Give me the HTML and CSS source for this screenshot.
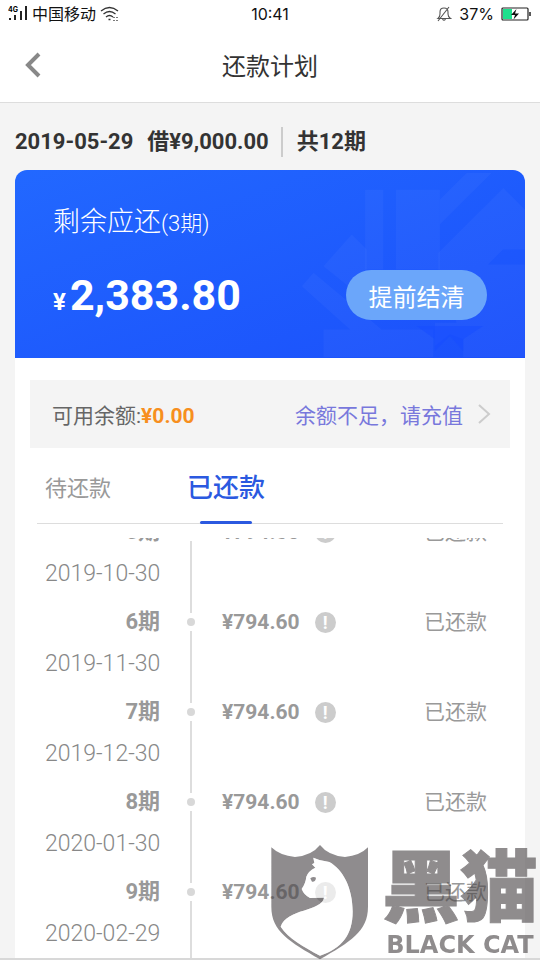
FILE: index.html
```html
<!DOCTYPE html>
<html lang="zh-CN">
<head>
    <meta charset="UTF-8">
    <meta name="viewport" content="width=device-width, initial-scale=1.0">
    <title>还款计划</title>
    <link rel="stylesheet" href="styles.css">
</head>
<body>

<div class="status-bar">
    <div class="status-left">
        <svg width="20" height="16" viewBox="0 0 20 16">
            <text x="0" y="6" class="net">4G</text>
            <path d="M1 12h2v2H1zM6 9h2v5H6zM12 5h2v9h-2zM17 0h2v14h-2z" fill="#222"/>
        </svg>
        <span>中国移动</span>
        <svg width="19" height="16" viewBox="0 0 19 16" fill="none" stroke="#333" stroke-width="1.3">
            <path d="M1 5Q9.500 -2 18 5M3.500 8Q9.500 3 15.500 8M6 11Q9.500 8 13 11"/>
            <path d="M8.500 13.500h2M14 11v1M17 11v1M14 14v1M17 14v1"/>
        </svg>
    </div>
    <div class="status-time">10:41</div>
    <div class="status-right">
        <svg width="16" height="16" viewBox="0 0 16 16" fill="none" stroke="#555" stroke-width="1.1">
            <path d="M2 12.500Q4 11 4 8V6Q4 2 8 2T12 6V8Q12 11 14.500 12.500ZM6.500 13Q8 15.500 9.500 13M13 1L2 15"/>
        </svg>
        <span>37%</span>
        <svg width="31" height="14" viewBox="0 0 31 14">
            <rect x="1" y="1" width="26" height="12" rx="1" fill="#fff" stroke="#222" stroke-width="1.2"/>
            <path d="M2 2h9v10H2z" fill="#1ee08d"/>
            <path d="M29 5v4" stroke="#222" stroke-width="1.500"/>
            <path d="M15.500 2L10 8h4l-1.500 4.500L18 6.500h-4z" fill="#111"/>
        </svg>
    </div>
</div>

<header class="nav">
    <button class="back" aria-label="返回">
        <svg width="18" height="26" viewBox="0 0 18 26" fill="none" stroke="#888" stroke-width="4">
            <path d="M15 2L4 13L15 24"/>
        </svg>
    </button>
    <h1>还款计划</h1>
</header>

<main class="container">
    <div class="loan">
        <span>2019-05-29</span>
        <span class="loan-amount">借¥9,000.00</span>
        <span class="loan-terms">共12期</span>
    </div>

    <section class="summary">
        <svg class="summary-bg" viewBox="0 181 765 562" width="255" height="187">
            <g fill="#fff" fill-opacity=".03">
                <path d="M285 240H340V480H285zM378 240H510V480H378z"/>
                <path d="M510 345L665 190H590L510 270zM505 430L700 235L765 300V420H700L655 465H765V743H580V690L540 675L495 710V640H560L505 480z"/>
                <path d="M160 470L245 375L290 420V480L235 530zM95 530L130 490L340 665H245zM160 660H490V743H160z"/>
            </g>
            <path d="M440 650H640L580 690V725L540 680L495 725V690z" fill="#164bff" fill-opacity=".5"/>
        </svg>
        <div class="summary-title">剩余应还<small>(3期)</small></div>
        <div class="summary-row">
            <div class="total"><small>¥</small>2,383.80</div>
            <button class="settle">提前结清</button>
        </div>
    </section>

    <section class="panel">
        <div class="available">
            <div>可用余额:<b>¥0.00</b></div>
            <a href="#">余额不足，请充值
                <svg width="14" height="22" viewBox="0 0 14 22" fill="none" stroke="#ccc" stroke-width="2">
                    <path d="M2 2L12 11L2 20"/>
                </svg>
            </a>
        </div>

        <div class="tabs">
            <button class="tab">待还款</button>
            <button class="tab active">已还款</button>
        </div>

        <div class="list">
            <div class="row">
                <div class="term"><b>5期</b><span>2019-10-30</span></div>
                <div class="line"></div>
                <div class="amount">¥794.60 <i class="info">!</i></div>
                <div class="state">已还款</div>
            </div>
            <div class="row">
                <div class="term"><b>6期</b><span>2019-11-30</span></div>
                <div class="line"></div>
                <div class="amount">¥794.60 <i class="info">!</i></div>
                <div class="state">已还款</div>
            </div>
            <div class="row">
                <div class="term"><b>7期</b><span>2019-12-30</span></div>
                <div class="line"></div>
                <div class="amount">¥794.60 <i class="info">!</i></div>
                <div class="state">已还款</div>
            </div>
            <div class="row">
                <div class="term"><b>8期</b><span>2020-01-30</span></div>
                <div class="line"></div>
                <div class="amount">¥794.60 <i class="info">!</i></div>
                <div class="state">已还款</div>
            </div>
            <div class="row">
                <div class="term"><b>9期</b><span>2020-02-29</span></div>
                <div class="line"></div>
                <div class="amount">¥794.60 <i class="info">!</i></div>
                <div class="state">已还款</div>
            </div>
        </div>
    </section>
</main>

<div class="watermark">
    <svg width="100" height="116" viewBox="30 27 300 348">
        <path class="shield" fill-rule="evenodd" d="M34 37Q60 62 105 66Q155 62 180 30Q205 62 255 66Q300 62 324 37V215C324 290 270 320 180 373C90 320 34 290 34 215ZM160 68L178 75L208 81C250 105 278 160 278 230C278 300 245 340 180 362C130 335 85 310 62 275C80 220 185 230 192 188L150 189Q132 180 125 162Q137 145 139 125Q145 108 166 98L156 88L163 84Z"/>
        <path class="cat" d="M160 68L178 75L208 81C250 105 278 160 278 230C278 300 245 340 180 362C130 335 85 310 62 275C80 220 185 230 192 188L150 189Q132 180 125 162Q137 145 139 125Q145 108 166 98L156 88L163 84Z"/>
        <path class="shield" d="M151 130Q160 123 168 128Q167 141 156 140Q153 136 151 130Z"/>
    </svg>
    <div class="brand">
        <div class="brand-cn">黑猫</div>
        <div class="brand-en">BLACK CAT</div>
    </div>
</div>

</body>
</html>
```

FILE: styles.css
```css
* {
    box-sizing: border-box;
}
body {
    margin: 0;
    height: 100vh;
    display: flex;
    flex-direction: column;
    overflow: hidden;
    background: #f4f4f4;
    border-bottom: 2px solid #d8d8d8;
    color: #333;
    font-family: Roboto, "Noto Sans CJK SC", sans-serif;
}
button {
    padding: 0;
    border: none;
    background: none;
    font-family: inherit;
    cursor: pointer;
}
a {
    text-decoration: none;
}
svg {
    display: block;
}

/* status bar */
.status-bar {
    display: grid;
    grid-template-columns: 1fr auto 1fr;
    align-items: center;
    height: 28px;
    padding: 0 8px;
    background: #fff;
    color: #111;
    font-size: 16px;
    line-height: 20px;
    font-family: Inter, "Noto Sans CJK SC", sans-serif;
}
.status-left, .status-right {
    display: flex;
    align-items: center;
    gap: 4px;
}
.status-right {
    justify-content: flex-end;
    gap: 7px;
}
.net {
    font-size: 7px;
    font-weight: bold;
}

/* nav */
.nav {
    display: grid;
    grid-template-columns: 60px 1fr 60px;
    align-items: center;
    height: 75px;
    background: #fff;
    border-bottom: 1px solid #ddd;
}
.back {
    justify-self: center;
    margin-left: 6px;
}
.nav h1 {
    margin: 0;
    padding-top: 4px;
    text-align: center;
    font-size: 24px;
    line-height: 32px;
    font-weight: normal;
}

.container {
    flex: 1;
    min-height: 0;
    display: flex;
    flex-direction: column;
    padding: 0 15px;
}
.loan {
    display: flex;
    align-items: baseline;
    height: 67px;
    padding-top: 24px;
    font-size: 22px;
    line-height: 30px;
    font-weight: bold;
}
.loan-amount {
    margin-left: 14px;
}
.loan-terms {
    margin-left: 12px;
    padding-left: 14px;
    border-left: 2px solid #ccc;
}

/* blue card */
.summary {
    position: relative;
    padding: 30px 38px 38px;
    border-radius: 12px 12px 0 0;
    background: linear-gradient(160deg, #2268ff, #1b50fb);
    color: #fff;
}
.summary-bg {
    position: absolute;
    top: 0;
    right: 0;
}
.summary-title {
    height: 44px;
    line-height: 44px;
    font-size: 27px;
    font-weight: 300;
}
.summary-title small {
    font-size: 22px;
}
.summary-row {
    position: relative;
    display: flex;
    align-items: center;
    justify-content: space-between;
    padding-top: 26px;
}
.total {
    font-size: 43px;
    font-weight: bold;
    line-height: 50px;
}
.total small {
    margin-right: 4px;
    font-size: 24px;
    line-height: 24px;
}
.settle {
    width: 141px;
    height: 50px;
    border-radius: 25px;
    background: #6ba6fa;
    color: #fff;
    font-size: 24px;
}

.panel {
    flex: 1;
    min-height: 0;
    display: flex;
    flex-direction: column;
    padding-top: 22px;
    background: #fff;
}
.available {
    flex: none;
    display: flex;
    align-items: center;
    justify-content: space-between;
    height: 68px;
    margin: 0 15px;
    padding: 0 19px 0 22px;
    background: #f4f4f4;
    color: #666;
    font-size: 21px;
}
.available b {
    color: #f78f1e;
}
.available a {
    display: flex;
    align-items: center;
    gap: 14px;
    color: #7878dc;
}

/* tabs */
.tabs {
    flex: none;
    display: flex;
    gap: 76px;
    height: 76px;
    margin: 0 22px 14px;
    padding-left: 8px;
    border-bottom: 1px solid #ddd;
}
.tab {
    position: relative;
    color: #999;
    font-size: 22px;
}
.tab.active {
    color: #2b59e0;
    font-size: 26px;
    font-weight: 500;
}
.tab.active::after {
    content: "";
    position: absolute;
    left: 13px;
    right: 13px;
    bottom: -1px;
    height: 3px;
    border-radius: 2px;
    background: #2b59e0;
}

/* repayment list, scrolled under the tabs */
.list {
    flex: 1;
    min-height: 0;
    display: flex;
    flex-direction: column;
    justify-content: flex-end;
    overflow: hidden;
    color: #999;
    font-size: 22px;
}
.row {
    flex: none;
    display: grid;
    grid-template-columns: 115px 62px 1fr auto;
    height: 90px;
    padding: 4px 38px 0 30px;
    line-height: 40px;
}
.term {
    display: flex;
    flex-direction: column;
    gap: 2px;
    text-align: right;
}
.term span {
    font-size: 23px;
    font-weight: 300;
    white-space: nowrap;
    color: #888;
}
.line {
    display: flex;
    flex-direction: column;
    align-items: center;
    gap: 5px;
    padding-top: 16px;
}
.line::before {
    content: "";
    flex: none;
    width: 8px;
    height: 8px;
    border-radius: 50%;
    background: #d8d8d8;
}
.line::after {
    content: "";
    width: 2px;
    height: 72px;
    flex: none;
    background: #ddd;
}
.amount {
    display: flex;
    align-items: center;
    gap: 15px;
    height: 40px;
    font-size: 21px;
    font-weight: bold;
}
.info {
    width: 21px;
    height: 21px;
    border-radius: 50%;
    background: #ccc;
    color: #fff;
    text-align: center;
    line-height: 21px;
    font-size: 18px;
    font-style: normal;
}
.state {
    font-size: 21px;
}

/* watermark */
.watermark {
    position: fixed;
    right: 2px;
    bottom: 0;
    display: flex;
    align-items: flex-end;
    gap: 12px;
    pointer-events: none;
}
.shield {
    fill: rgba(75, 70, 72, .62);
}
.cat {
    fill: rgba(255, 255, 255, .6);
}
.brand {
    color: #4b4648;
    text-align: center;
    opacity: .62;
}
.brand-cn {
    line-height: 80px;
    font-size: 78px;
    font-weight: 900;
    -webkit-text-stroke: 1px #4b4648;
}
.brand-en {
    line-height: 30px;
    font-family: "DejaVu Sans", sans-serif;
    font-size: 24px;
    font-weight: bold;
    white-space: nowrap;
}
```
